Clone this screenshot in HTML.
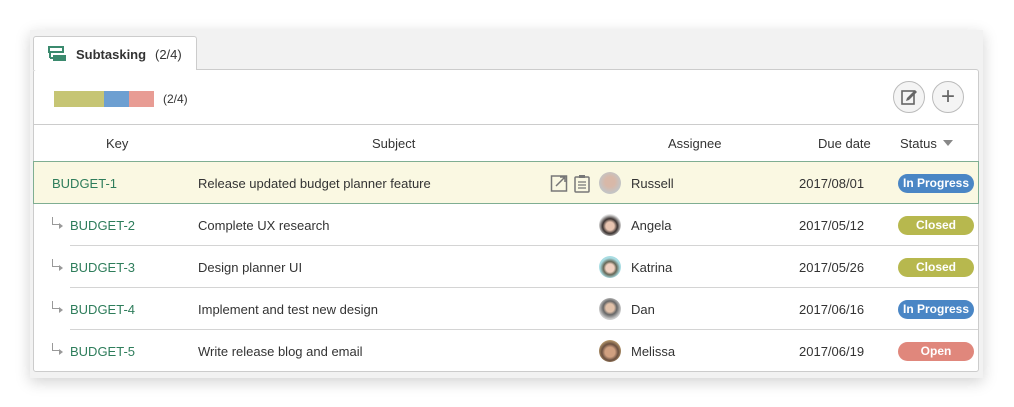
<!DOCTYPE html><html><head><style>
*{margin:0;padding:0;box-sizing:border-box}
body{width:1014px;height:407px;background:#fff;font-family:"Liberation Sans",sans-serif;font-size:13px;color:#333;position:relative;overflow:hidden}
.outer{position:absolute;left:30px;top:30px;width:953px;height:348px;background:#f2f2f2;box-shadow:0 4px 14px rgba(0,0,0,.18)}
.panel{position:absolute;left:33px;top:69px;width:946px;height:303px;background:#fff;border:1px solid #ccc;border-radius:3px}
.tab{position:absolute;left:33px;top:36px;width:164px;height:34px;background:#fff;border:1px solid #ccc;border-bottom:none;border-radius:3px 3px 0 0}
.a{position:absolute;white-space:nowrap}
.line{position:absolute;height:1px;background:#d4d4d4}
.key{color:#2e7d5b}
.badge{position:absolute;left:898px;width:76px;height:19px;border-radius:10px;color:#fff;font-weight:bold;font-size:12px;text-align:center;line-height:19px}
.av{position:absolute;left:599px;width:22px;height:22px;border-radius:50%}
.arr{position:absolute;left:52px;width:8px;height:8px;border-left:1.5px solid #999;border-bottom:1.5px solid #999}
.arr:after{content:"";position:absolute;right:-6px;bottom:-4.5px;border:3.5px solid transparent;border-left:4px solid #999}
.btn{position:absolute;top:81px;width:32px;height:32px;border:1px solid #bbb;border-radius:50%;background:#f4f4f4}
</style></head><body>
<div class="outer"></div>
<div class="panel"></div>
<div class="tab"></div>
<svg class="a" style="left:48px;top:45px" width="20" height="18"><rect x="1" y="2" width="14" height="5" fill="none" stroke="#3b8a6e" stroke-width="2"/><rect x="5" y="10" width="13" height="6" fill="#3b8a6e"/><line x1="2" y1="7" x2="2" y2="13" stroke="#3b8a6e" stroke-width="2"/><line x1="2" y1="13" x2="6" y2="13" stroke="#3b8a6e" stroke-width="2"/></svg>
<div class="a" style="left:76px;top:47px;font-weight:bold;font-size:13px">Subtasking</div>
<div class="a" style="left:155px;top:47px;font-size:13px">(2/4)</div>
<div class="a" style="left:54px;top:91px;width:50px;height:16px;background:#c6c574"></div>
<div class="a" style="left:104px;top:91px;width:25px;height:16px;background:#6d9fd1"></div>
<div class="a" style="left:129px;top:91px;width:25px;height:16px;background:#e89c94"></div>
<div class="a" style="left:163px;top:92px;font-size:12px">(2/4)</div>
<div class="btn" style="left:893px"></div>
<svg class="a" style="left:899px;top:87px" width="20" height="20"><rect x="3" y="4" width="12" height="13" fill="none" stroke="#666" stroke-width="1.6"/><path d="M7 14 L8 11 L16 3 L18 5 L10 13 Z" fill="#666"/></svg>
<div class="btn" style="left:932px"></div>
<div class="a" style="left:938px;top:84px;font-size:24px;color:#666;line-height:26px;width:20px;text-align:center">+</div>
<div class="line" style="left:34px;top:124px;width:944px;background:#ccc"></div>
<div class="a" style="left:106px;top:136px">Key</div>
<div class="a" style="left:372px;top:136px">Subject</div>
<div class="a" style="left:668px;top:136px">Assignee</div>
<div class="a" style="left:818px;top:136px">Due date</div>
<div class="a" style="left:900px;top:136px">Status</div>
<div class="a" style="left:943px;top:140px;border:5px solid transparent;border-top:6px solid #888"></div>
<div class="a" style="left:33px;top:161px;width:946px;height:43px;background:#faf8e2;border:1px solid #7fae92"></div>
<div class="a key" style="left:52px;top:176px">BUDGET-1</div>
<div class="a" style="left:198px;top:176px">Release updated budget planner feature</div>
<svg class="a" style="left:550px;top:174px" width="42" height="19"><rect x="1.5" y="2" width="15" height="15" fill="none" stroke="#777" stroke-width="1.5"/><path d="M6 12 L15 3 M10 3 L15 3 L15 8" fill="none" stroke="#777" stroke-width="1.5"/><rect x="25" y="3" width="14" height="15" rx="1" fill="none" stroke="#777" stroke-width="1.5"/><rect x="29" y="1" width="6" height="3" fill="#777"/><path d="M28 8H36M28 11H36M28 14H36" stroke="#777" stroke-width="1.3"/></svg>
<div class="av" style="top:172px;background:radial-gradient(circle at 50% 45%,#d8b8a8 30%,#c4c4c4 65%)"></div>
<div class="a" style="left:631px;top:176px">Russell</div>
<div class="a" style="left:799px;top:176px">2017/08/01</div>
<div class="badge" style="top:174px;background:#4a86c5">In Progress</div>
<div class="line" style="left:70px;top:245px;width:908px"></div>
<div class="line" style="left:70px;top:287px;width:908px"></div>
<div class="line" style="left:70px;top:329px;width:908px"></div>
<div class="arr" style="top:217px"></div><div class="a key" style="left:70px;top:218px">BUDGET-2</div>
<div class="a" style="left:198px;top:218px">Complete UX research</div>
<div class="av" style="top:214px;background:radial-gradient(circle at 50% 55%,#e8c4b0 25%,#3a3230 45%,#e4e4e4 70%)"></div>
<div class="a" style="left:631px;top:218px">Angela</div>
<div class="a" style="left:799px;top:218px">2017/05/12</div>
<div class="badge" style="top:216px;background:#b7b84e">Closed</div>
<div class="arr" style="top:259px"></div><div class="a key" style="left:70px;top:260px">BUDGET-3</div>
<div class="a" style="left:198px;top:260px">Design planner UI</div>
<div class="av" style="top:256px;background:radial-gradient(circle at 50% 55%,#f0d0c0 25%,#665 40%,#a8dce2 62%)"></div>
<div class="a" style="left:631px;top:260px">Katrina</div>
<div class="a" style="left:799px;top:260px">2017/05/26</div>
<div class="badge" style="top:258px;background:#b7b84e">Closed</div>
<div class="arr" style="top:301px"></div><div class="a key" style="left:70px;top:302px">BUDGET-4</div>
<div class="a" style="left:198px;top:302px">Implement and test new design</div>
<div class="av" style="top:298px;background:radial-gradient(circle at 50% 45%,#e0c0a8 25%,#666 42%,#ccc 68%)"></div>
<div class="a" style="left:631px;top:302px">Dan</div>
<div class="a" style="left:799px;top:302px">2017/06/16</div>
<div class="badge" style="top:300px;background:#4a86c5">In Progress</div>
<div class="arr" style="top:343px"></div><div class="a key" style="left:70px;top:344px">BUDGET-5</div>
<div class="a" style="left:198px;top:344px">Write release blog and email</div>
<div class="av" style="top:340px;background:radial-gradient(circle at 50% 55%,#d0a080 30%,#6a5040 50%,#c0a070 75%)"></div>
<div class="a" style="left:631px;top:344px">Melissa</div>
<div class="a" style="left:799px;top:344px">2017/06/19</div>
<div class="badge" style="top:342px;background:#e0877c">Open</div>
</body></html>
